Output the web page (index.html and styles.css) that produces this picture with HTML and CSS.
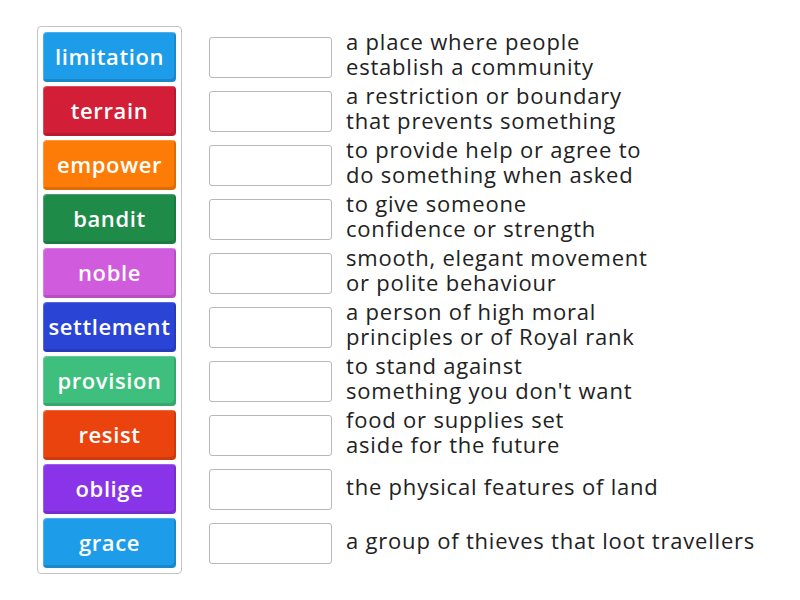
FILE: index.html
```html
<!DOCTYPE html>
<html lang="en">
<head>
  <meta charset="UTF-8">
  <title>Match up</title>
  <link rel="stylesheet" href="styles.css">
</head>
<body>
  <div class="game">
    <div class="tiles">
      <div class="tile blue">limitation</div>
      <div class="tile red">terrain</div>
      <div class="tile orange">empower</div>
      <div class="tile green">bandit</div>
      <div class="tile pink">noble</div>
      <div class="tile indigo">settlement</div>
      <div class="tile mint">provision</div>
      <div class="tile vermilion">resist</div>
      <div class="tile purple">oblige</div>
      <div class="tile blue">grace</div>
    </div>

    <div class="targets">
      <div class="row"><div class="slot"></div><p class="clue">a place where people<br>establish a community</p></div>
      <div class="row"><div class="slot"></div><p class="clue">a restriction or boundary<br>that prevents something</p></div>
      <div class="row"><div class="slot"></div><p class="clue">to provide help or agree to<br>do something when asked</p></div>
      <div class="row"><div class="slot"></div><p class="clue">to give someone<br>confidence or strength</p></div>
      <div class="row"><div class="slot"></div><p class="clue">smooth, elegant movement<br>or polite behaviour</p></div>
      <div class="row"><div class="slot"></div><p class="clue">a person of high moral<br>principles or of Royal rank</p></div>
      <div class="row"><div class="slot"></div><p class="clue">to stand against<br>something you don't want</p></div>
      <div class="row"><div class="slot"></div><p class="clue">food or supplies set<br>aside for the future</p></div>
      <div class="row"><div class="slot"></div><p class="clue">the physical features of land</p></div>
      <div class="row"><div class="slot"></div><p class="clue">a group of thieves that loot travellers</p></div>
    </div>
  </div>
</body>
</html>
```

FILE: styles.css
```css
body {
  margin: 0;
  background-color: #fff;
  font-family: 'Open Sans', Lato, sans-serif;
  color: #222;
}

.game {
  display: flex;
  align-items: flex-start;
  padding: 26px 0 0 37px;
}

.tiles {
  display: flex;
  flex-direction: column;
  gap: 4px;
  padding: 5px;
  border: 1px solid #c4c4c4;
  border-radius: 4px;
}

.tile {
  width: 133px;
  height: 50px;
  display: flex;
  align-items: center;
  justify-content: center;
  padding-bottom: 3px;
  border-radius: 4px;
  color: #fff;
  font-size: 22px;
  font-weight: 600;
  letter-spacing: 0.6px;
  box-sizing: border-box;
  box-shadow: inset -2px -3px 0 rgba(0, 0, 0, 0.12), inset 1px 1px 0 rgba(255, 255, 255, 0.2);
}

.blue { background-color: #1d9ce9; }
.red { background-color: #d21e36; }
.orange { background-color: #fd7c07; }
.green { background-color: #1f8b49; }
.pink { background-color: #d15bdd; }
.indigo { background-color: #2a44d6; }
.mint { background-color: #3ebf7d; }
.vermilion { background-color: #ea430d; }
.purple { background-color: #8a34e9; }

.targets {
  display: flex;
  flex-direction: column;
  gap: 4px;
  padding-top: 6px;
  margin-left: 27px;
}

.row {
  height: 50px;
  display: flex;
  align-items: center;
  gap: 14px;
}

.slot {
  width: 123px;
  height: 41px;
  box-sizing: border-box;
  border: 1px solid #b8b8b8;
  border-radius: 3px;
  flex-shrink: 0;
}

.clue {
  margin: 0;
  padding-bottom: 6px;
  font-size: 22px;
  line-height: 25px;
  letter-spacing: 0.8px;
}
```
